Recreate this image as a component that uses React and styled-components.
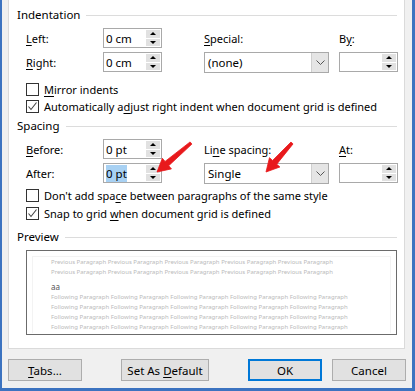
import React from 'react';
import styled, { createGlobalStyle } from 'styled-components';

const Global = createGlobalStyle`
  html, body { margin: 0; padding: 0; background: #f0f0f0; }
  body {
    font-family: "Noto Sans", "Segoe UI", sans-serif;
    font-size: 11px;
    color: #000;
  }
`;

const Window = styled.div`
  position: relative;
  width: 415px;
  height: 391px;
  box-sizing: border-box;
  background: #f0f0f0;
  border-left: 2px solid #3c73c0;
  border-right: 3px solid #3c73c0;
  border-bottom: 3px solid #3c73c0;
  overflow: hidden;
`;

const Panel = styled.div`
  margin: 0 7px 0 6px;
  height: 349px;
  box-sizing: border-box;
  background: #fff;
  border: 1px solid #dadada;
  border-top: none;
  padding: 7px 7px 0 8px;
`;

const SectionTitle = styled.div`
  display: flex;
  align-items: center;
  gap: 6px;
  height: 16px;
  line-height: 16px;
  font-size: 11.5px;
  margin-top: ${p => p.top || 0}px;
  &::after {
    content: '';
    flex: 1;
    border-top: 1px solid #dcdcdc;
  }
`;

const FieldGrid = styled.div`
  display: grid;
  grid-template-columns: 77px 101px 135px 58px;
  grid-template-rows: 20px 20px;
  row-gap: 4px;
  align-items: center;
  margin: 5px 0 0 9px;
`;

const Label = styled.div`
  white-space: nowrap;
`;

const Key = styled.span`
  text-decoration: underline;
  text-underline-offset: 2px;
`;

const SpinBox = styled.div`
  width: 59px;
  height: 20px;
  box-sizing: border-box;
  border: 1px solid #a9a9a9;
  background: #fff;
  display: flex;
`;

const SpinValue = styled.div`
  flex: 1;
  padding-left: 2px;
  display: flex;
  align-items: center;
  font-size: 11.5px;
`;

const Selected = styled.span`
  background: #a8d1f3;
  padding: 1px 0;
`;

const SpinButtons = styled.div`
  width: 14px;
  margin: 1px 1px 1px 0;
  display: flex;
  flex-direction: column;
  gap: 1px;
`;

const SpinBtn = styled.div`
  flex: 1;
  background: #e1e1e1;
  display: flex;
  align-items: center;
  justify-content: center;
  &::before {
    content: '';
    border-left: 3px solid transparent;
    border-right: 3px solid transparent;
    ${p => (p.down ? 'border-top: 3px solid #000;' : 'border-bottom: 3px solid #000;')}
  }
`;

const Select = styled.div`
  width: 125px;
  height: 21px;
  box-sizing: border-box;
  border: 1px solid #a9a9a9;
  background: #fff;
  display: flex;
`;

const SelectValue = styled.div`
  flex: 1;
  padding-left: 3px;
  display: flex;
  align-items: center;
  font-size: 11.5px;
`;

const SelectButton = styled.div`
  width: 16px;
  background: #e5e5e5;
  border-left: 1px solid #cfcfcf;
  display: flex;
  align-items: center;
  justify-content: center;
`;

const CheckRow = styled.div`
  display: flex;
  align-items: center;
  gap: 5px;
  height: ${p => p.h || 17}px;
  margin-left: 9px;
  margin-top: ${p => p.top || 0}px;
  white-space: nowrap;
`;

const Box = styled.span`
  width: 13px;
  height: 13px;
  box-sizing: border-box;
  border: 1px solid #333;
  background: #fff;
  display: flex;
  align-items: center;
  justify-content: center;
`;

const PreviewFrame = styled.div`
  margin: 5px 0 0 9px;
  height: 85px;
  box-sizing: border-box;
  border: 1px solid #6b6b6b;
  background: #fff;
  padding: 5px 5px 1px;
  overflow: hidden;
`;

const PreviewInner = styled.div`
  height: 100%;
  box-sizing: border-box;
  border: 1px solid #f3f3f3;
  border-bottom: none;
  padding-left: 18px;
  font-size: 6px;
  line-height: 10px;
  color: #bababa;
  white-space: nowrap;
  overflow: hidden;
`;

const SampleText = styled.div`
  margin-top: 5px;
  height: 10px;
  line-height: 9px;
  font-size: 8px;
  color: #555;
`;

const ButtonBar = styled.div`
  display: flex;
  margin: 10px 0 0 6px;
`;

const Button = styled.div`
  width: ${p => p.w}px;
  height: 22px;
  margin-left: ${p => p.gap || 0}px;
  box-sizing: border-box;
  border: ${p => (p.primary ? '2px solid #0078d7' : '1px solid #adadad')};
  background: #e1e1e1;
  display: flex;
  align-items: center;
  justify-content: center;
  font-size: 11.5px;
`;

const Overlay = styled.svg`
  position: absolute;
  left: -2px;
  top: 0;
  pointer-events: none;
`;

const Spin = ({ children }) => (
  <SpinBox>
    <SpinValue>{children}</SpinValue>
    <SpinButtons>
      <SpinBtn />
      <SpinBtn down />
    </SpinButtons>
  </SpinBox>
);

const Chevron = () => (
  <svg width="9" height="5" viewBox="0 0 9 5">
    <polyline points="0.5,0.5 4.5,4.5 8.5,0.5" fill="none" stroke="#555" strokeWidth="1" />
  </svg>
);

const Dropdown = ({ children }) => (
  <Select>
    <SelectValue>{children}</SelectValue>
    <SelectButton>
      <Chevron />
    </SelectButton>
  </Select>
);

const Check = ({ checked, children, ...rest }) => (
  <CheckRow {...rest}>
    <Box>
      {checked && (
        <svg width="11" height="11" viewBox="0 0 11 11">
          <polyline points="1.5,5.5 4,8.5 9.5,1.5" fill="none" stroke="#444" strokeWidth="1.1" />
        </svg>
      )}
    </Box>
    <span>{children}</span>
  </CheckRow>
);

const Arrow = ({ from, to }) => {
  const dx = to[0] - from[0];
  const dy = to[1] - from[1];
  const len = Math.hypot(dx, dy);
  const ux = dx / len;
  const uy = dy / len;
  const nx = -uy;
  const ny = ux;
  const bx = to[0] - ux * 13;
  const by = to[1] - uy * 13;
  const pts = [
    [from[0] + nx * 1.4, from[1] + ny * 1.4],
    [bx + nx * 2.8, by + ny * 2.8],
    [bx + nx * 7, by + ny * 7],
    to,
    [bx - nx * 7, by - ny * 7],
    [bx - nx * 2.8, by - ny * 2.8],
    [from[0] - nx * 1.4, from[1] - ny * 1.4],
  ];
  return (
    <polygon
      points={pts.map(p => p.join(',')).join(' ')}
      fill="#e8191c"
      stroke="#e8191c"
      strokeWidth="0.8"
      strokeLinejoin="round"
    />
  );
};

const prev = Array(5).fill('Previous Paragraph').join(' ');
const next = Array(5).fill('Following Paragraph').join(' ');

export default function App() {
  return (
    <>
      <Global />
      <Window>
        <Panel>
          <SectionTitle>Indentation</SectionTitle>
          <FieldGrid>
            <Label><Key>L</Key>eft:</Label>
            <Spin>0 cm</Spin>
            <Label><Key>S</Key>pecial:</Label>
            <Label>B<Key>y</Key>:</Label>
            <Label><Key>R</Key>ight:</Label>
            <Spin>0 cm</Spin>
            <Dropdown>(none)</Dropdown>
            <Spin />
          </FieldGrid>
          <Check top={9}><Key>M</Key>irror indents</Check>
          <Check checked>Automatically a<Key>d</Key>just right indent when document grid is defined</Check>

          <SectionTitle top={3}>Spacing</SectionTitle>
          <FieldGrid>
            <Label><Key>B</Key>efore:</Label>
            <Spin>0 pt</Spin>
            <Label>Li<Key>n</Key>e spacing:</Label>
            <Label><Key>A</Key>t:</Label>
            <Label>After:</Label>
            <Spin><Selected>0 pt</Selected></Spin>
            <Dropdown>Single</Dropdown>
            <Spin />
          </FieldGrid>
          <Check top={3} h={18}>Don't add spa<Key>c</Key>e between paragraphs of the same style</Check>
          <Check checked h={18}>Snap to grid <Key>w</Key>hen document grid is defined</Check>

          <SectionTitle top={7}>Preview</SectionTitle>
          <PreviewFrame>
            <PreviewInner>
              <div>{prev}</div>
              <div>{prev}</div>
              <SampleText>aa</SampleText>
              <div>{next}</div>
              <div>{next}</div>
              <div>{next}</div>
              <div>{next}</div>
              <div>{next}</div>
            </PreviewInner>
          </PreviewFrame>
        </Panel>
        <ButtonBar>
          <Button w={74}><span><Key>T</Key>abs...</span></Button>
          <Button w={88} gap={39}><span>Set As <Key>D</Key>efault</span></Button>
          <Button w={74} gap={39} primary>OK</Button>
          <Button w={74} gap={10}>Cancel</Button>
        </ButtonBar>
        <Overlay width="415" height="391">
          <Arrow from={[191, 143]} to={[157, 172]} />
          <Arrow from={[292, 143]} to={[266, 172]} />
        </Overlay>
      </Window>
    </>
  );
}
